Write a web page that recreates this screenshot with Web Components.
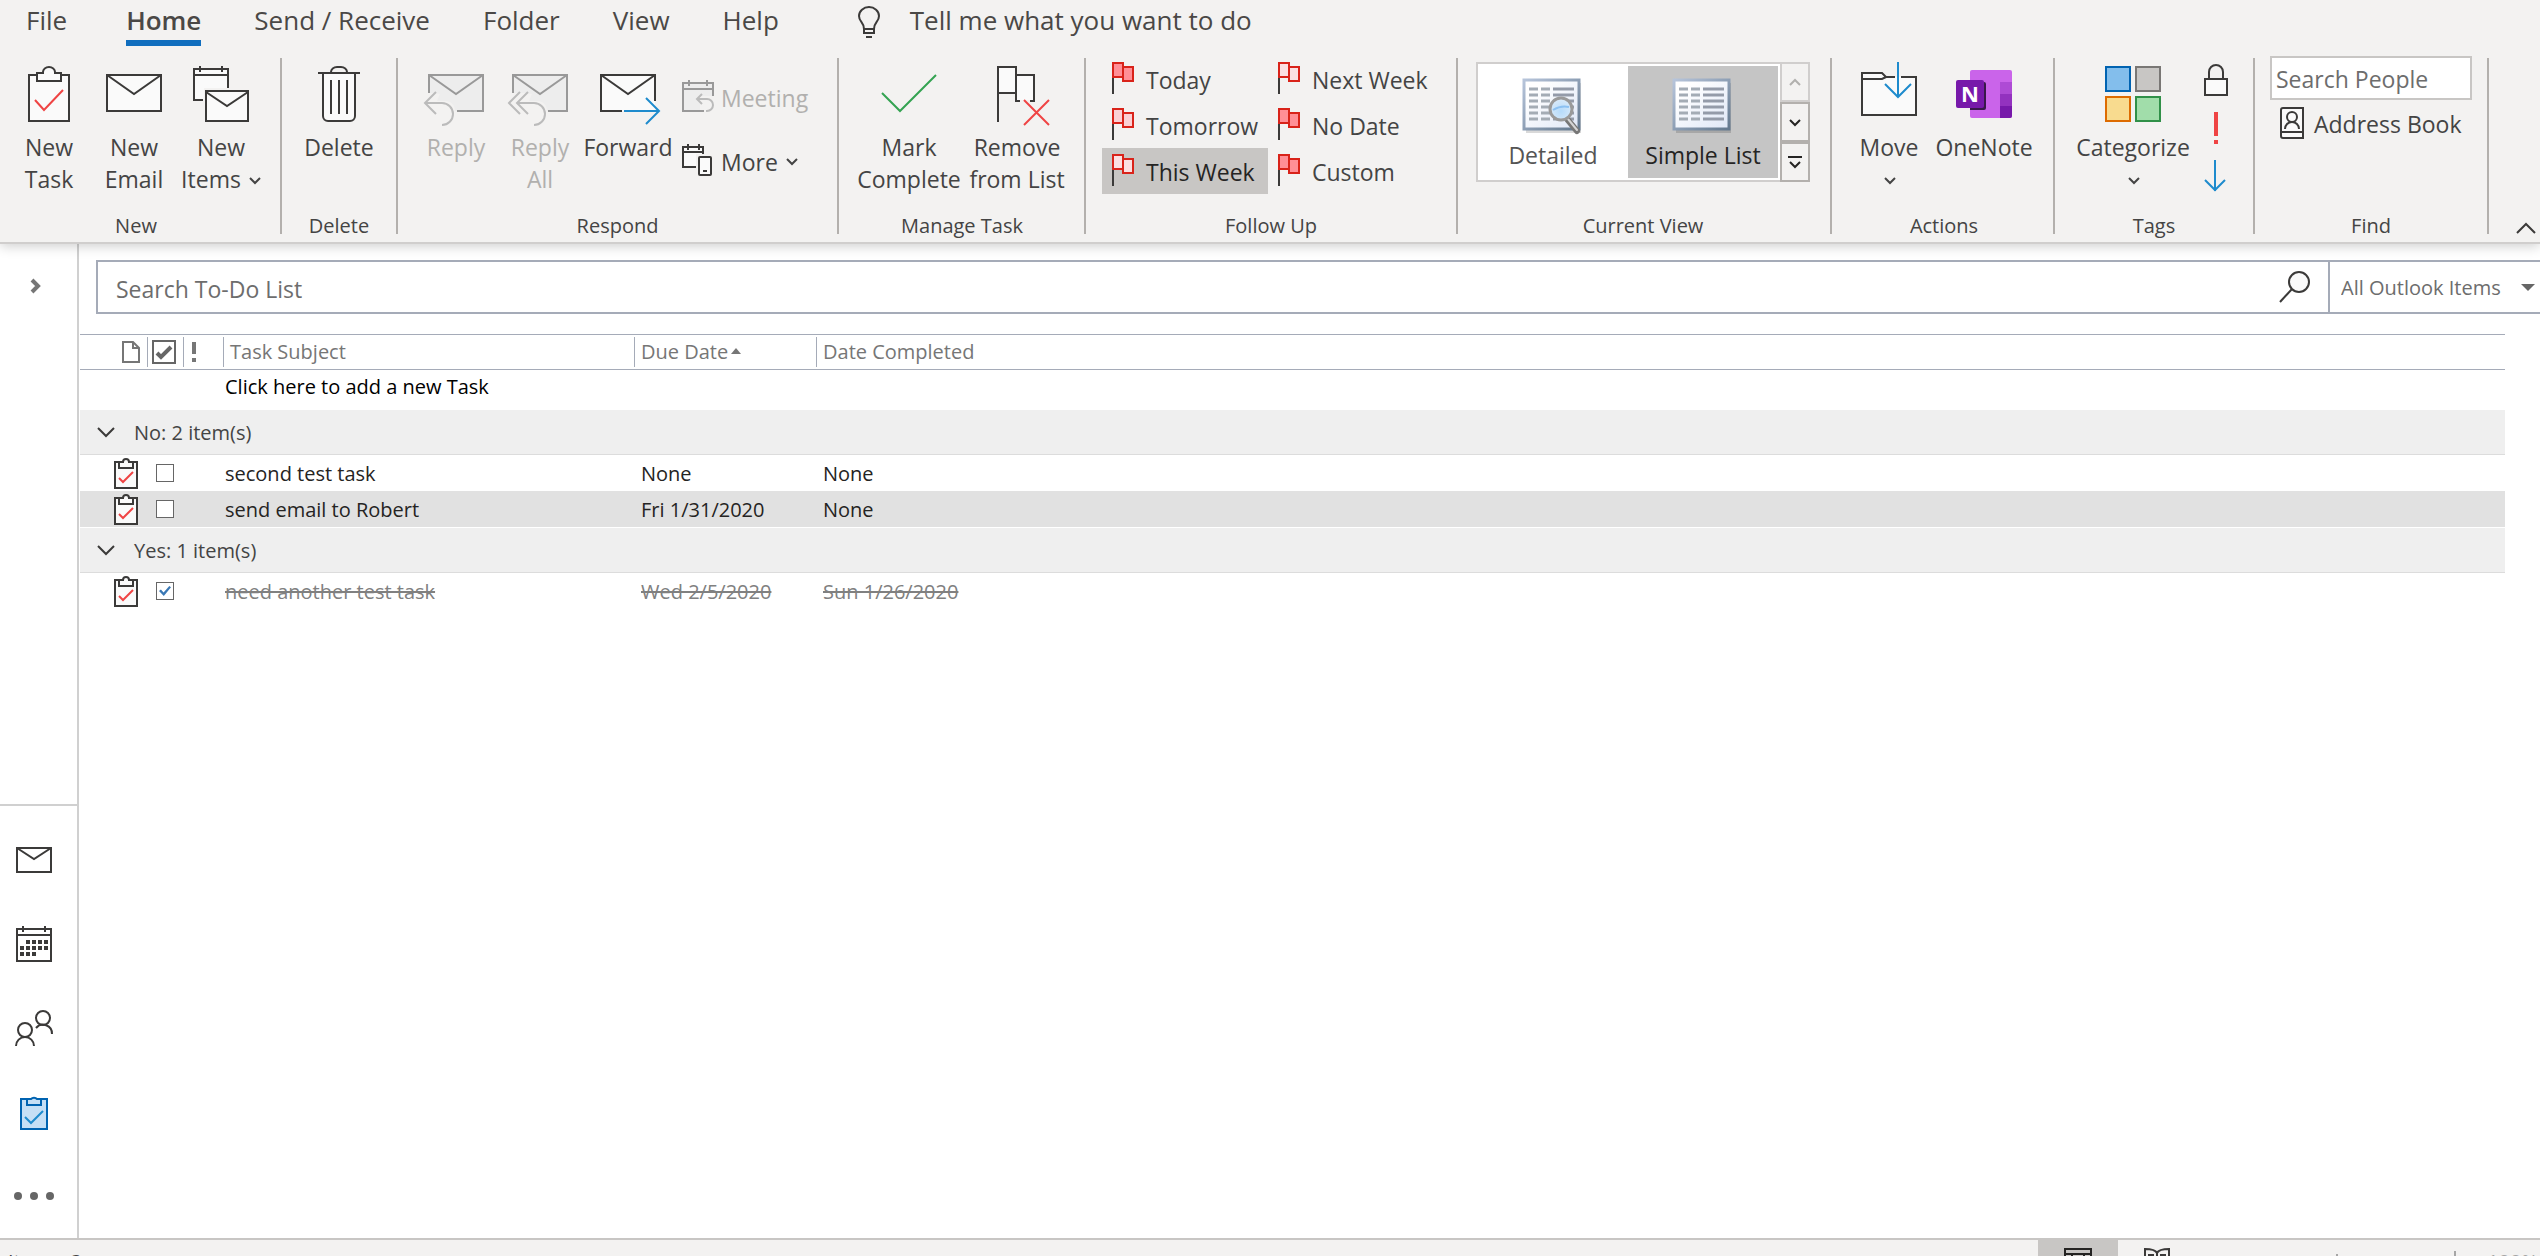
<!DOCTYPE html>
<html lang="en">
<head>
<meta charset="utf-8">
<title>To-Do List - Outlook</title>
<style>
html, body { margin: 0; overflow: hidden; }
body { font-family: "Open Sans", "Noto Sans", sans-serif; font-size: 20px; line-height: 32px; color: #444; background: #fff; }
</style>
</head>
<body>
<outlook-app>
  <ribbon-tabs slot="tabs">
    <a href="#file">File</a>
    <a href="#home" class="on">Home</a>
    <a href="#send">Send / Receive</a>
    <a href="#folder">Folder</a>
    <a href="#view">View</a>
    <a href="#help">Help</a>
  </ribbon-tabs>

  <ribbon-group slot="ribbon" label="New" style="--l:6px;--r:14px">
    <ribbon-button icon="task" style="--w:86px">New<br>Task</ribbon-button>
    <ribbon-button icon="mail" style="--w:84px">New<br>Email</ribbon-button>
    <ribbon-button icon="newitems" style="--w:90px">New<br>Items <ol-icon name="chev"></ol-icon></ribbon-button>
  </ribbon-group>
  <ribbon-group slot="ribbon" label="Delete" style="--l:13px;--r:13px">
    <ribbon-button icon="trash" style="--w:88px">Delete</ribbon-button>
  </ribbon-group>
  <ribbon-group slot="ribbon" label="Respond">
    <ribbon-button icon="reply" disabled style="--w:84px">Reply</ribbon-button>
    <ribbon-button icon="replyall" disabled style="--w:84px">Reply<br>All</ribbon-button>
    <ribbon-button icon="forward" style="--w:92px">Forward</ribbon-button>
    <ribbon-stack style="--top:16px;--gap:16px;--w:147px">
      <small-button icon="meeting" disabled>Meeting</small-button>
      <small-button icon="more">More <ol-icon name="chev"></ol-icon></small-button>
    </ribbon-stack>
  </ribbon-group>
  <ribbon-group slot="ribbon" label="Manage Task" style="--l:15px;--r:14px">
    <ribbon-button icon="check" style="--w:110px">Mark<br>Complete</ribbon-button>
    <ribbon-button icon="unflag" style="--w:106px">Remove<br>from List</ribbon-button>
  </ribbon-group>
  <ribbon-group slot="ribbon" label="Follow Up">
    <ribbon-stack style="--w:166px">
      <small-button flag icon="flag" style="--fill:#ff8f96">Today</small-button>
      <small-button flag icon="flag" style="--fill:#fbd0d4">Tomorrow</small-button>
      <small-button flag icon="flag" style="--fill:#fbe0e2" pressed>This Week</small-button>
    </ribbon-stack>
    <ribbon-stack style="--w:172px">
      <small-button flag icon="flag" style="--fill:#fbe0e2">Next Week</small-button>
      <small-button flag icon="flag" style="--fill:#ff8f96">No Date</small-button>
      <small-button flag icon="flag" style="--fill:#ff8f96">Custom</small-button>
    </ribbon-stack>
  </ribbon-group>
  <ribbon-group slot="ribbon" label="Current View" style="--l:18px;--r:20px">
    <view-gallery></view-gallery>
  </ribbon-group>
  <ribbon-group slot="ribbon" label="Actions" style="--l:17px;--r:14px">
    <ribbon-button icon="move" style="--w:80px">Move<br><ol-icon name="chev"></ol-icon></ribbon-button>
    <ribbon-button icon="onenote" style="--w:110px">OneNote</ribbon-button>
  </ribbon-group>
  <ribbon-group slot="ribbon" label="Tags">
    <ribbon-button icon="categorize" style="--w:124px">Categorize<br><ol-icon name="chev"></ol-icon></ribbon-button>
    <tag-buttons></tag-buttons>
  </ribbon-group>
  <ribbon-group slot="ribbon" label="Find" style="--l:15px;--r:15px">
    <people-finder></people-finder>
  </ribbon-group>

  <nav-rail slot="rail"></nav-rail>
  <search-bar slot="main"></search-bar>
  <task-table slot="main"></task-table>
  <status-bar slot="status"></status-bar>
</outlook-app>

<script>
const K = '#3b3a39', W = '#fafafa';
const s = (w, h, body, vb) => `<svg width="${w}" height="${h}" viewBox="${vb || `0 0 ${w} ${h}`}" fill="none" stroke="${K}" stroke-width="2" overflow="visible" aria-hidden="true">${body}</svg>`;
const big = (x, y, body) => s(64, 60, body, `${x} ${y} 64 60`);
const sheet = (extra = '') => `
  <defs>
    <linearGradient id="edge" x1="0" y1="0" x2="1" y2="1"><stop offset="0" stop-color="#b6c4da"/><stop offset="1" stop-color="#64798f"/></linearGradient>
    <linearGradient id="paper" x1="0" y1="0" x2="1" y2="1"><stop offset=".2" stop-color="#fff"/><stop offset="1" stop-color="#dfe7f7"/></linearGradient>
    <radialGradient id="lens" cx=".5" cy=".6" r=".6"><stop offset="0" stop-color="#b5dbfb"/><stop offset="1" stop-color="#dcebf9"/></radialGradient>
  </defs>
  <rect x="3" y="4" width="55" height="50" fill="#000" opacity=".15" stroke="none"/>
  <rect x="1" y="1" width="55" height="49" fill="url(#paper)" stroke="url(#edge)" stroke-width="3"/>
  <path d="M6 10h9M6 16h9M6 22h9M6 28h9M6 34h9M6 40h9M18 10h9M18 16h9M18 22h9M18 28h9M18 34h9M18 40h9" stroke="#a4acb5" stroke-width="3"/>
  <path d="M30 10h21M30 16h21M30 22h21M30 28h21M30 34h21M30 40h21" stroke="#949ba9" stroke-width="3"/>${extra}`;
const ICONS = {
  task: big(-11, 0, `<path d="M1 9h40v46H1z" fill="${W}"/><path d="M9 7h6V6a6 5 0 0 1 12 0v1h6v8H9z" fill="${W}"/><path d="M7 34l9 10 19-20" stroke="#ef4444"/>`),
  mail: big(-4, -8, `<path d="M1 1h54v36H1z" fill="${W}"/><path d="M1 1l27 19L55 1"/>`),
  newitems: big(-4, 0, `<path d="M2 4h32v18H11v11H2z" fill="${W}" stroke="none"/><path d="M1 9h34M7 0v6M29 0v6M35 22V3H1v31h9"/><path d="M13 25h42v30H13z" fill="${W}"/><path d="M13 26l21 14 21-14"/>`),
  trash: big(-11, 0, `<path d="M5 7h32v43a5 5 0 0 1-5 5H10a5 5 0 0 1-5-5z" fill="${W}"/><path d="M0 7h42M13 6a6 5 0 0 1 6-5h4a6 5 0 0 1 6 5M13 14v34M21 14v34M29 14v34"/>`),
  reply: big(0, -8, `<path d="M5 19V1h54v36H31c0-6-4-10-10-10H13l3-7-7-1z" fill="#ededed" stroke="none"/><g stroke="#999"><path d="M5 19V1h54v36H33"/><path d="M5 1l27 19L59 1"/></g><path d="M12 18 1 29l11 11M1 29h17a11 11 0 0 1 0 22" stroke="#bbb"/>`),
  replyall: big(0, -8, `<path d="M5 19V1h54v36H39c0-6-4-10-10-10H21l3-7-7-1z" fill="#ededed" stroke="none"/><g stroke="#999"><path d="M5 19V1h54v36H40"/><path d="M5 1l27 19L59 1"/></g><path d="M12 18 1 29l11 11M20 18 9 29l11 11M9 29h17a11 11 0 0 1 0 22" stroke="#bbb"/>`),
  forward: big(-4, -8, `<path d="M1 1h54v36H1z" fill="${W}" stroke="none"/><path d="M22 37H1V1h54v26"/><path d="M1 1l27 19L55 1"/><path d="M24 37h35M46 24l13 13-13 13" stroke="#1e8bcd"/>`),
  meeting: s(32, 32, `<path d="M1 3h30v13H18v15H1z" fill="#ededed" stroke="none"/><path d="M22 31H1V3h30v13M1 9h30M7 0v6M25 0v6" stroke="#999"/><path d="M20 14l-5 5 5 5M15 19h10a6 6 0 0 1 0 12h-1" stroke="#bbb"/>`),
  more: s(32, 32, `<path d="M1 3h20v7H14v13H1z" fill="${W}" stroke="none"/><path d="M14 23H1V3h20v7M1 8h20M6 0v6M17 0v6"/><rect x="17" y="13" width="12" height="18" rx="1" fill="${W}"/><path d="M21 27h4"/>`),
  check: big(-4, -8, `<path d="M1 19l18 18L55 1" stroke="#34a352"/>`),
  unflag: big(-12, 0, `<path d="M1 1h18v26H1z" fill="${W}"/><path d="M19 9h18v25H19z" fill="${W}" stroke="none"/><path d="M1 0v56M23 35h-4V9h18v26h-4"/><path d="M27 34l25 25M52 34 27 59" stroke="#ef4444"/>`),
  flag: s(24, 32, `<path d="M1 14v18"/><g stroke="#d9231a" fill="var(--fill)"><path d="M1 1h10v14H1zM11 5h10v14H11z"/></g>`),
  move: big(-4, 4, `<path d="M1 17V11h20l4 4h30v38H1z" fill="${W}" stroke="none"/><path d="M34 15h-9l-4-4H1v42h54V15H40M1 17h20l4-2"/><path d="M37 0v35M24 22l13 13 13-13" stroke="#1e8bcd"/>`),
  onenote: big(-4, -4, `<g stroke="none"><rect x="14" width="42" height="48" rx="2" fill="#ca64ea"/><path fill="#ae4bd5" d="M44 12h12v12H44z"/><path fill="#9332bf" d="M44 24h12v12H44z"/><path fill="#7719aa" d="M44 36h12v10a2 2 0 0 1-2 2H44z"/><path fill="#38184a" d="M14 12h14a2 2 0 0 1 2 2v24a2 2 0 0 1-2 2H14z"/><rect y="10" width="28" height="28" rx="2" fill="#7719aa"/><text x="14" y="32" fill="#fff" font-family="Open Sans" font-size="22" font-weight="700" text-anchor="middle">N</text></g>`),
  categorize: big(-4, 0, `<path d="M1 1h24v24H1z" fill="#83beec" stroke="#0063b1"/><path d="M31 1h24v24H31z" fill="#c8c6c4" stroke="#797775"/><path d="M1 31h24v24H1z" fill="#f8db8f" stroke="#dd6b00"/><path d="M31 31h24v24H31z" fill="#a1ddaa" stroke="#309048"/>`),
  lock: s(24, 32, `<path d="M5 15V8a7 7 0 0 1 14 0v7"/><path d="M1 15h22v16H1z" fill="${W}"/>`),
  bang: s(24, 32, `<path d="M12 0v24M12 28v4" stroke="#ef4444" stroke-width="4"/>`),
  down: s(24, 32, `<path d="M11 0v31M1 20l10 10 10-10" stroke="#1e8bcd"/>`),
  book: s(24, 32, `<path d="M3 1h20v30H3a2 2 0 0 1-2-2V3a2 2 0 0 1 2-2z" fill="${W}"/><circle cx="12" cy="10" r="5"/><path d="M5 22a7 7 0 0 1 14 0M2 25h21"/>`),
  bulb: s(22, 34, `<path d="M6 23C6 16 1 16 1 10a10 9 0 0 1 20 0c0 6-5 6-5 13zM6 23v4h10v-4M8 31h6"/>`),
  chev: s(12, 7, `<path d="M1 1l5 5 5-5" stroke="currentColor"/>`),
  chevup: s(12, 7, `<path d="M1 6l5-5 5 5" stroke="currentColor"/>`),
  chevmore: s(14, 13, `<path d="M0 1h14M2 6l5 5 5-5" stroke="currentColor"/>`),
  collapse: s(20, 12, `<path d="M1 11l9-9 9 9"/>`),
  expand: s(12, 14, `<path d="M2 1l6 6-6 6" stroke="#767676" stroke-width="4"/>`),
  group: s(18, 12, `<path d="M1 1l8 8 8-8"/>`),
  simple: s(60, 58, sheet()),
  detailed: s(60, 58, sheet(`<path d="M44 40l10 12" stroke="#777" stroke-width="6" stroke-linecap="round"/><path d="M45 40l9 11" stroke="#d5d5d5" stroke-width="2" stroke-linecap="round"/><circle cx="38" cy="30" r="11" fill="url(#lens)" stroke="#9a9a9a" stroke-width="3"/><path d="M30 31q8-5 16-3" stroke="#8cc1f2"/>`)),
  find: s(32, 32, `<circle cx="20" cy="11" r="10" fill="${W}"/><path d="M13 18 1 31"/>`),
  navmail: s(36, 36, `<path d="M1 6h34v24H1z"/><path d="M1 6l17 11L35 6"/>`),
  navcal: s(36, 36, `<path d="M1 3h34v32H1zM1 9h34M7 0v6M29 0v6"/><path d="M10 16h24M4 22h30M4 28h18" stroke-width="4" stroke-dasharray="4 2"/>`),
  navpeople: s(38, 36, `<circle cx="10" cy="20" r="7"/><path d="M1 36a9 9 0 0 1 18 0"/><circle cx="28" cy="8" r="7"/><path d="M21 18a9 9 0 0 1 16 6"/>`),
  navtask: s(28, 36, `<g stroke="#0063b1" fill="#c5dff5"><path d="M1 5h26v30H1z"/><path d="M7 5h4a4 4 0 0 1 6 0h4v6H7z"/></g><path d="M5 23l6 6 12-12" stroke="#1e8bcd"/>`),
  navdots: s(40, 8, `<g fill="#666" stroke="none"><circle cx="4" cy="4" r="4"/><circle cx="20" cy="4" r="4"/><circle cx="36" cy="4" r="4"/></g>`),
  rowtask: s(24, 32, `<path d="M1 5h22v26H1z" fill="${W}"/><path d="M5 5h4a3 3 0 0 1 6 0h4v6H5z" fill="${W}"/><path d="M5 21l4 4 10-10" stroke="#ef4444"/>`),
  doc: s(18, 22, `<path d="M1 1h10l6 6v14H1zM11 1v6h6" stroke="#767676"/>`),
  hcheck: s(24, 24, `<path d="M1 1h22v22H1z" stroke="#666"/><path d="M5 13l4 4L19 7" stroke="#666" stroke-width="4"/>`),
  hbang: s(4, 20, `<path d="M2 0v12M2 16v4" stroke="#767676" stroke-width="4"/>`),
  sort: s(10, 6, `<path d="M0 6l5-6 5 6z" fill="#767676" stroke="none"/>`),
  normal: s(28, 28, `<path d="M1 1h26v24H1zM1 6h26M8 6v19M20 6v19" stroke="#252423"/>`),
  reading: s(26, 26, `<path d="M13 5c-2-4-8-4-12-4v22c4 0 10 0 12 3 2-3 8-3 12-3V1c-4 0-10 0-12 4zM13 5v21M4 7h6M16 7h6"/>`)
};

const RESET = `
  :host, * { box-sizing: border-box; }
  button, input, select { font: inherit; color: inherit; margin: 0; padding: 0; border: 0; border-radius: 0; background: none; outline: 0; }
  a { color: inherit; text-decoration: none; }`;

function define(name, css, html) {
  customElements.define(name, class extends HTMLElement {
    constructor() { super(); this.attachShadow({ mode: 'open' }); }
    connectedCallback() {
      this.shadowRoot.innerHTML = `<style>${RESET}${css}</style>` + (typeof html === 'function' ? html(this) : html);
    }
  });
}

define('ol-icon', `:host { display: inline-flex; flex: none; vertical-align: middle; box-sizing: content-box; } svg { display: block; }`,
  el => ICONS[el.getAttribute('name')]);

define('outlook-app', `
  :host { display: grid; grid-template-rows: auto 1fr auto; min-height: calc(100vh + 28px); }
  header { background: #f3f2f1; border-bottom: 2px solid #d0cecd; box-shadow: 0 2px 12px rgba(0,0,0,.2); position: relative; z-index: 1; }
  .ribbon { display: flex; padding-bottom: 8px; }
  .collapse { margin-left: auto; align-self: flex-end; padding: 0 4px 0 0; display: flex; }
  .work { display: grid; grid-template-columns: auto 1fr; }
  main { padding-top: 16px; min-width: 0; }`,
  `<header>
     <slot name="tabs"></slot>
     <div class="ribbon"><slot name="ribbon"></slot><button class="collapse" aria-label="Collapse ribbon"><ol-icon name="collapse"></ol-icon></button></div>
   </header>
   <div class="work"><slot name="rail"></slot><main><slot name="main"></slot></main></div>
   <slot name="status"></slot>`);

define('ribbon-tabs', `
  :host { display: flex; gap: 53px; height: 56px; padding-left: 26px; font-size: 26px; line-height: 40px; align-items: flex-start; }
  ::slotted(a) { color: #4a4846; text-decoration: none; }
  ::slotted(a:first-child) { margin-right: 6px; }
  ::slotted(a.on) { font-weight: 600; box-shadow: 0 6px #106ebe; }
  .tell { display: flex; gap: 30px; margin-left: 26px; color: #4a4846; }
  .tell ol-icon { padding-top: 6px; }`,
  `<slot></slot><button class="tell"><ol-icon name="bulb"></ol-icon>Tell me what you want to do</button>`);

define('ribbon-group', `
  :host { display: flex; flex-direction: column; flex: none; height: 178px; padding: 0 calc(var(--r, 16px) + 2px) 0 var(--l, 16px);
    background: linear-gradient(#b3b0ad, #b3b0ad) right bottom / 2px 176px no-repeat; }
  .body { display: flex; flex: 1; align-items: flex-start; }
  .label { text-align: center; line-height: 16px; font-size: 20px; }`,
  el => `<div class="body"><slot></slot></div><div class="label">${el.getAttribute('label')}</div>`);

define('ribbon-button', `
  :host { display: block; width: var(--w); }
  button { display: flex; flex-direction: column; align-items: center; width: 100%; padding-top: 10px; gap: 5px; font-size: 23px; line-height: 32px; white-space: nowrap; }
  button:disabled { color: #b1b0ae; }
  ::slotted(ol-icon) { padding-bottom: 2px; padding-left: 2px; }`,
  el => `<button ${el.hasAttribute('disabled') ? 'disabled' : ''}><ol-icon name="${el.getAttribute('icon')}"></ol-icon><span><slot></slot></span></button>`);

define('ribbon-stack', `:host { display: flex; flex-direction: column; width: var(--w); padding-top: var(--top, 0); gap: var(--gap, 0); }`, `<slot></slot>`);

define('small-button', `
  :host { display: block; }
  button { display: flex; align-items: center; gap: 7px; height: 48px; width: 100%; padding-left: 8px; font-size: 23px; line-height: 32px; white-space: nowrap; }
  span { padding-top: 3px; }
  :host([flag]) button { height: 46px; gap: 10px; padding-left: 10px; }
  :host([flag]) span { padding-top: 2px; }
  :host([flag]) ol-icon { padding-bottom: 2px; }
  :host([pressed]) button { background: #c8c6c4; color: #252423; }
  button:disabled { color: #b1b0ae; }
  ::slotted(ol-icon) { padding: 0 0 6px 2px; }`,
  el => `<button ${el.hasAttribute('disabled') ? 'disabled' : ''} ${el.hasAttribute('pressed') ? 'aria-pressed="true"' : ''}><ol-icon name="${el.getAttribute('icon')}"></ol-icon><span><slot></slot></span></button>`);

define('view-gallery', `
  :host { display: flex; margin-top: 6px; font-size: 23px; line-height: 32px; color: #555; }
  .views { display: flex; border: 2px solid #d0cecd; border-right: 0; background: #fff; padding: 2px 2px 2px 0; }
  .views button { display: flex; flex-direction: column; align-items: center; width: 150px; height: 112px; padding-top: 13px; gap: 2px; }
  .views .on { background: #c5c5c5; color: #252423; }
  .scroll { display: flex; flex-direction: column; color: #252423; }
  .scroll button { display: flex; align-items: center; justify-content: center; width: 30px; flex: 1; border: 2px solid #b3b0ad; }
  .scroll button:disabled { border-color: #d0cecd; color: #b1b0ae; }`,
  `<div class="views"><button><ol-icon name="detailed"></ol-icon>Detailed</button><button class="on"><ol-icon name="simple"></ol-icon>Simple List</button></div>
   <div class="scroll"><button disabled aria-label="Up"><ol-icon name="chevup"></ol-icon></button><button aria-label="Down"><ol-icon name="chev"></ol-icon></button><button aria-label="More views"><ol-icon name="chevmore"></ol-icon></button></div>`);

define('tag-buttons', `
  :host { display: flex; flex-direction: column; width: 42px; }
  button { display: flex; align-items: center; justify-content: center; height: 48px; }`,
  `<button aria-label="Private"><ol-icon name="lock"></ol-icon></button><button aria-label="High importance"><ol-icon name="bang"></ol-icon></button><button aria-label="Low importance"><ol-icon name="down"></ol-icon></button>`);

define('people-finder', `
  :host { display: flex; flex-direction: column; width: 202px; font-size: 23px; line-height: 32px; }
  input { width: 100%; height: 44px; padding: 2px 4px 0; border: 2px solid #c8c6c4; background: #fff; }
  input::placeholder { color: #6d6d6d; opacity: 1; }
  button { display: flex; align-items: center; gap: 10px; height: 46px; padding-left: 10px; white-space: nowrap; }
  span { padding-top: 2px; }`,
  `<input type="text" aria-label="Search People" placeholder="Search People"><button><ol-icon name="book"></ol-icon><span>Address Book</span></button>`);

define('nav-rail', `
  :host { display: flex; flex-direction: column; width: 79px; border-right: 2px solid #d0d0d0; }
  .open { display: flex; padding: 35px 0 0 30px; }
  nav { margin-top: auto; border-top: 2px solid #d0d0d0; padding-top: 12px; }
  a { display: flex; align-items: center; justify-content: center; height: 84px; padding-right: 9px; }`,
  `<button class="open" aria-label="Expand folder pane"><ol-icon name="expand"></ol-icon></button>
   <nav><a href="#mail" aria-label="Mail"><ol-icon name="navmail"></ol-icon></a><a href="#calendar" aria-label="Calendar"><ol-icon name="navcal"></ol-icon></a><a href="#people" aria-label="People"><ol-icon name="navpeople"></ol-icon></a><a href="#tasks" aria-label="Tasks"><ol-icon name="navtask"></ol-icon></a><a href="#more" aria-label="More"><ol-icon name="navdots"></ol-icon></a></nav>`);

define('search-bar', `
  :host { display: flex; height: 54px; margin-left: 17px; border: 2px solid #a5abb8; border-right: 0; color: #6d6d6d; }
  input { flex: 1; min-width: 0; padding: 4px 0 0 18px; font-size: 23px; }
  input::placeholder { color: #6d6d6d; opacity: 1; }
  button { display: flex; align-items: center; padding: 0 17px; }
  label { display: flex; align-items: center; width: 212px; border-left: 2px solid #a5abb8; }
  select { appearance: none; width: 182px; padding: 2px 0 0 11px; font-size: 20px; line-height: 32px; }
  i { border: 7px solid transparent; border-top-color: #666; border-bottom: 0; margin-left: 9px; }`,
  `<input type="text" aria-label="Search To-Do List" placeholder="Search To-Do List"><button aria-label="Search"><ol-icon name="find"></ol-icon></button>
   <label><select aria-label="Search scope"><option>All Outlook Items</option></select><i></i></label>`);

const TASKS = [
  { group: 'No: 2 item(s)' },
  { subject: 'second test task', due: 'None', done: 'None' },
  { subject: 'send email to Robert', due: 'Fri 1/31/2020', done: 'None', cls: 'sel' },
  { group: 'Yes: 1 item(s)' },
  { subject: 'need another test task', due: 'Wed 2/5/2020', done: 'Sun 1/26/2020', cls: 'old', checked: true }
];
define('task-table', `
  :host { display: block; margin: 20px 35px 0 1px; }
  table { width: 100%; table-layout: fixed; border-spacing: 0; color: #252423; line-height: 34px; }
  th, td { padding: 0; text-align: left; font-weight: 400; white-space: nowrap; }
  thead th { height: 36px; border: solid #a5abb8; border-width: 1px 0; color: #767676; background: linear-gradient(#a5abb8, #a5abb8) left 2px / 1px 30px no-repeat; padding-left: 7px; }
  thead th:first-child { background: none; padding-left: 42px; }
  thead th:nth-child(2) { padding-left: 5px; }
  thead th:nth-child(3) { padding-left: 9px; }
  thead .mark { display: flex; }
  .add td { height: 40px; padding: 0 0 6px 2px; color: #000; }
  .group th { height: 45px; background: #efefef; border-bottom: 1px solid #dcdcdc; padding: 2px 0 0 17px; color: #444; }
  .group button { display: flex; align-items: center; gap: 19px; }
  .item td { height: 36px; padding-left: 7px; }
  .item td:first-child { padding-left: 34px; }
  .item td:nth-child(2) { padding-left: 9px; }
  .item td:nth-child(4) { padding-left: 2px; padding-top: 2px; }
  .item td:nth-child(n+5) { padding-top: 2px; }
  .item ol-icon { display: flex; }
  .sel td { height: 37px; background: #e1e1e1; border-bottom: 1px solid #fff; }
  .old td { color: #808080; text-decoration: line-through; }
  input { appearance: none; display: grid; place-items: center; width: 18px; height: 18px; border: 1px solid #666; background: #fff; }
  input:checked::before { content: ""; width: 12px; height: 10px; background: #3a78b5; clip-path: polygon(0 50%, 16% 36%, 38% 66%, 86% 0, 100% 12%, 40% 100%); }`,
  `<table>
     <colgroup><col style="width:67px"><col style="width:36px"><col style="width:40px"><col style="width:411px"><col style="width:182px"><col></colgroup>
     <thead><tr><th aria-label="Icon"><ol-icon class="mark" name="doc"></ol-icon></th><th aria-label="Complete"><ol-icon class="mark" name="hcheck"></ol-icon></th><th aria-label="Priority"><ol-icon class="mark" name="hbang"></ol-icon></th><th>Task Subject</th><th>Due Date<ol-icon name="sort" style="padding:0 0 6px 3px"></ol-icon></th><th>Date Completed</th></tr></thead>
     <tbody><tr class="add"><td></td><td></td><td></td><td colspan="3">Click here to add a new Task</td></tr>
     ${TASKS.map(t => t.group
       ? `<tr class="group"><th colspan="6"><button><ol-icon name="group"></ol-icon>${t.group}</button></th></tr>`
       : `<tr class="item ${t.cls || ''}"><td><ol-icon name="rowtask"></ol-icon></td><td><input type="checkbox" aria-label="${t.subject}" ${t.checked ? 'checked' : ''}></td><td></td><td>${t.subject}</td><td>${t.due}</td><td>${t.done}</td></tr>`).join('')}
     </tbody></table>`);

define('status-bar', `
  :host { display: flex; height: 46px; border-top: 2px solid #c8c6c4; background: #f3f2f1; padding: 0 2px 0 8px; line-height: 44px; }
  .views { margin-left: auto; display: flex; align-items: flex-start; }
  .views button { display: flex; width: 80px; height: 44px; padding: 8px 0 0 26px; }
  .views .on { background: #c8c6c4; }
  .zoom { display: flex; margin-left: 100px; align-items: center; color: #a6a6a6; }
  input { appearance: none; width: 158px; height: 24px; margin-right: 31px; }
  input::-webkit-slider-runnable-track { height: 22px; background: linear-gradient(#a6a6a6, #a6a6a6) left 38px top 3px / 2px 14px no-repeat; }
  input::-webkit-slider-thumb { appearance: none; width: 2px; height: 22px; background: #a6a6a6; }`,
  `<span>Items: 3</span>
   <div class="views"><button class="on" aria-label="Normal"><ol-icon name="normal"></ol-icon></button><button aria-label="Reading"><ol-icon name="reading"></ol-icon></button></div>
   <div class="zoom"><input type="range" aria-label="Zoom" min="0" max="100" value="100"><span>100%</span></div>`);
</script>
</body>
</html>
